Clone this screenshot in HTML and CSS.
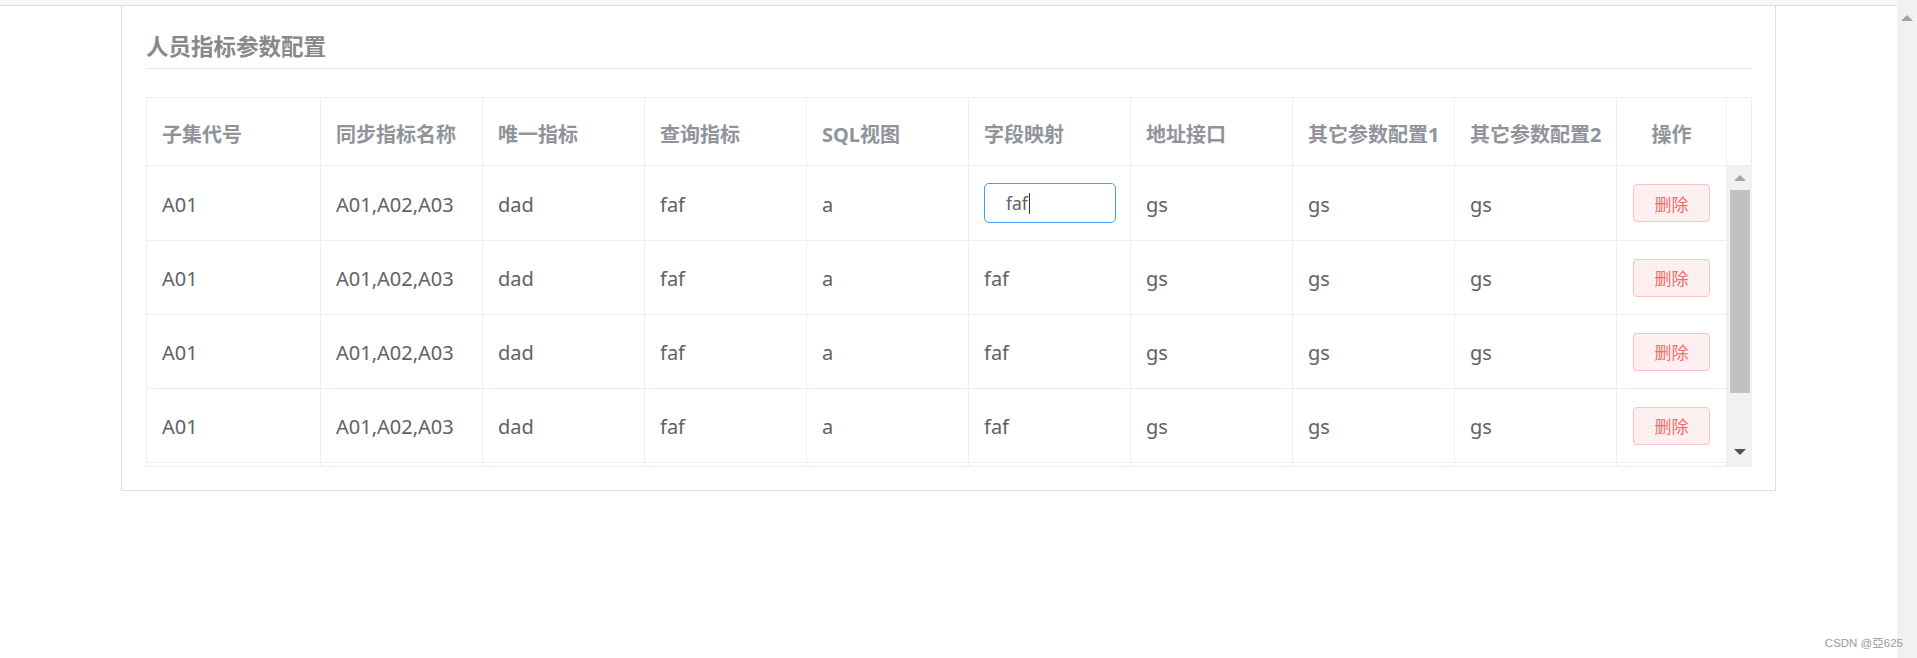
FILE: index.html
```html
<!DOCTYPE html>
<html lang="zh-CN">
<head>
<meta charset="utf-8">
<title>人员指标参数配置</title>
<link rel="stylesheet" href="styles.css">
</head>
<body>
<div class="page">
  <div class="main">
    <div class="topbar"></div>
    <div class="card">
      <h2 class="title">人员指标参数配置</h2>
      <div class="tbl">
        <div class="grid thead">
          <div class="th">子集代号</div>
          <div class="th">同步指标名称</div>
          <div class="th">唯一指标</div>
          <div class="th">查询指标</div>
          <div class="th">SQL视图</div>
          <div class="th">字段映射</div>
          <div class="th">地址接口</div>
          <div class="th">其它参数配置1</div>
          <div class="th">其它参数配置2</div>
          <div class="th center">操作</div>
          <div class="th gutter"></div>
        </div>
        <div class="tbody">
          <div class="rows">
            <div class="grid row first">
              <div class="td">A01</div>
              <div class="td">A01,A02,A03</div>
              <div class="td">dad</div>
              <div class="td">faf</div>
              <div class="td">a</div>
              <div class="td"><div class="input">faf<span class="caret"></span></div></div>
              <div class="td">gs</div>
              <div class="td">gs</div>
              <div class="td">gs</div>
              <div class="td center"><span class="btn-del">删除</span></div>
            </div>
            <div class="grid row">
              <div class="td">A01</div>
              <div class="td">A01,A02,A03</div>
              <div class="td">dad</div>
              <div class="td">faf</div>
              <div class="td">a</div>
              <div class="td">faf</div>
              <div class="td">gs</div>
              <div class="td">gs</div>
              <div class="td">gs</div>
              <div class="td center"><span class="btn-del">删除</span></div>
            </div>
            <div class="grid row">
              <div class="td">A01</div>
              <div class="td">A01,A02,A03</div>
              <div class="td">dad</div>
              <div class="td">faf</div>
              <div class="td">a</div>
              <div class="td">faf</div>
              <div class="td">gs</div>
              <div class="td">gs</div>
              <div class="td">gs</div>
              <div class="td center"><span class="btn-del">删除</span></div>
            </div>
            <div class="grid row">
              <div class="td">A01</div>
              <div class="td">A01,A02,A03</div>
              <div class="td">dad</div>
              <div class="td">faf</div>
              <div class="td">a</div>
              <div class="td">faf</div>
              <div class="td">gs</div>
              <div class="td">gs</div>
              <div class="td">gs</div>
              <div class="td center"><span class="btn-del">删除</span></div>
            </div>
            <div class="grid row peek" aria-hidden="true">
              <div class="td"></div>
              <div class="td"></div>
              <div class="td"></div>
              <div class="td"></div>
              <div class="td"></div>
              <div class="td"></div>
              <div class="td"></div>
              <div class="td"></div>
              <div class="td"></div>
              <div class="td"></div>
            </div>
          </div>
          <div class="vscroll">
            <div class="sb-btn"><span class="tri-up"></span></div>
            <div class="thumb"></div>
            <div class="sb-space"></div>
            <div class="sb-btn sb-down"><span class="tri-down"></span></div>
          </div>
        </div>
      </div>
    </div>
  </div>
  <div class="pagescroll">
    <div class="ps-btn"><span class="tri-up"></span></div>
  </div>
  <div class="watermark">CSDN @亞625</div>
</div>
</body>
</html>
```

FILE: styles.css
```css
* { box-sizing: border-box; }

html, body {
  margin: 0;
  padding: 0;
  background: #ffffff;
}

body {
  font-family: "Noto Sans", "Noto Sans CJK SC", sans-serif;
  color: #606266;
}

.page {
  position: relative;
  display: flex;
  width: 1917px;
  height: 658px;
  overflow: hidden;
}

.main {
  flex: 1;
  min-width: 0;
}

.topbar {
  height: 6px;
  background: #f7f7f7;
  border-bottom: 1px solid #e0e0e0;
}

.card {
  margin-left: 121px;
  width: 1655px;
  border: 1px solid #dedede;
  border-top: none;
  padding: 0 23px 23px 24px;
}

.title {
  margin: 0;
  padding: 24px 0 8px;
  font-family: "Noto Sans CJK SC", sans-serif;
  font-size: 22.5px;
  line-height: 30px;
  font-weight: 700;
  color: #888888;
  border-bottom: 1px solid #e6e6e6;
}

.tbl {
  margin-top: 28px;
  width: 1606px;
  border-left: 1px solid #ebeef5;
  border-top: 1px solid #ebeef5;
}

.grid {
  display: grid;
  grid-template-columns: 174px repeat(8, 162px) 110px;
}

.thead {
  grid-template-columns: 174px repeat(8, 162px) 110px 25px;
}

.th, .td {
  display: flex;
  align-items: center;
  padding-left: 15px;
  border-right: 1px solid #ebeef5;
  border-bottom: 1px solid #ebeef5;
  white-space: nowrap;
}

.th {
  height: 68px;
  padding-top: 3px;
  font-size: 20px;
  font-weight: 700;
  color: #909399;
}

.th.gutter {
  padding: 0;
}

.center {
  justify-content: center;
  padding-left: 0;
}

.tbody {
  display: flex;
}

.rows {
  width: 1580px;
  height: 301px;
  overflow: hidden;
  border-bottom: 1px solid #ebeef5;
}

.row .td {
  height: 74px;
  padding-top: 2px;
  font-size: 20px;
  color: #606266;
}

.row.first .td {
  height: 75px;
}

.input {
  display: flex;
  align-items: center;
  width: 132px;
  height: 40px;
  margin-top: -2px;
  padding-left: 21px;
  border: 1px solid #409eff;
  border-radius: 5px;
  font-size: 17.5px;
  color: #606266;
  background: #fff;
}

.caret {
  display: inline-block;
  width: 1px;
  height: 21px;
  margin-left: 1px;
  background: #303133;
}

.btn-del {
  display: flex;
  align-items: center;
  justify-content: center;
  width: 77px;
  height: 38px;
  margin-top: -2px;
  border: 1px solid #fbc4c4;
  border-radius: 4px;
  background: #fef0f0;
  color: #f56c6c;
  font-family: "Noto Sans CJK SC", sans-serif;
  font-size: 17px;
}

.vscroll {
  width: 25px;
  height: 301px;
  background: #f1f1f1;
  display: flex;
  flex-direction: column;
}

.sb-btn {
  height: 24px;
  display: flex;
  align-items: center;
  justify-content: center;
}

.sb-down {
  margin-bottom: 3px;
}

.thumb {
  height: 203px;
  margin: 0 2px 0 3px;
  background: #c1c1c1;
}

.sb-space {
  flex: 1;
}

.tri-up {
  width: 0;
  height: 0;
  border-left: 6px solid transparent;
  border-right: 6px solid transparent;
  border-bottom: 6px solid #a3a3a3;
}

.tri-down {
  width: 0;
  height: 0;
  border-left: 6px solid transparent;
  border-right: 6px solid transparent;
  border-top: 6px solid #505050;
}

.pagescroll {
  width: 20px;
  height: 658px;
  background: #f1f1f1;
}

.ps-btn {
  height: 36px;
  display: flex;
  align-items: center;
  justify-content: center;
}

.watermark {
  position: absolute;
  right: 14px;
  bottom: 8px;
  font-family: "Liberation Sans", "Noto Sans CJK SC", sans-serif;
  font-size: 11.5px;
  color: #9a9a9a;
  white-space: nowrap;
}
```
